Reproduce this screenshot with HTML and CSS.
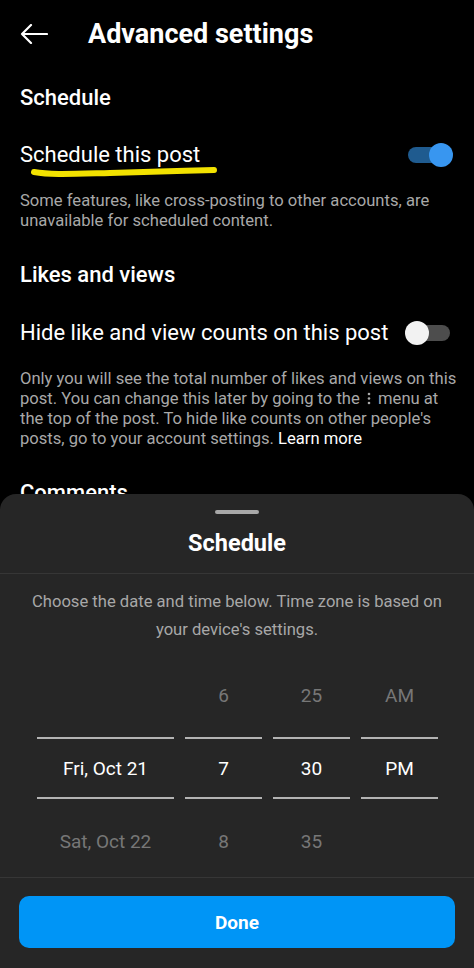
FILE: index.html
```html
<!DOCTYPE html>
<html>
<head>
    <title>Advanced settings</title>
    <link rel="stylesheet" href="styles.css">
</head>
<body>
  <div class="screen">

    <div class="topbar">
      <svg class="back" width="28" height="20" viewBox="0 0 28 20">
        <path d="M27 10H2M11 1L2 10l9 9" fill="none" stroke="#fff" stroke-width="2.2" stroke-linecap="round" stroke-linejoin="round"/>
      </svg>
      <h1>Advanced settings</h1>
    </div>

    <div class="section">
      <h2>Schedule</h2>
      <div class="row">
        <span class="label marked">Schedule this post
          <svg class="scribble" width="190" height="16" viewBox="0 0 190 16">
            <path d="M4 9C20 12 40 11 80 10S150 8 184 7" fill="none" stroke="#f2e200" stroke-width="6" stroke-linecap="round"/>
          </svg>
        </span>
        <span class="toggle on"><span class="knob"></span></span>
      </div>
      <p class="note">Some features, like cross-posting to other accounts, are unavailable for scheduled content.</p>
    </div>

    <div class="section">
      <h2>Likes and views</h2>
      <div class="row">
        <span class="label">Hide like and view counts on this post</span>
        <span class="toggle off"><span class="knob"></span></span>
      </div>
      <p class="note wide">Only you will see the total number of likes and views on this post. You can change this later by going to the <svg class="dots" width="4" height="13" viewBox="0 0 4 13"><circle cx="2" cy="2" r="1.3" fill="#a8a8a8"/><circle cx="2" cy="6.5" r="1.3" fill="#a8a8a8"/><circle cx="2" cy="11" r="1.3" fill="#a8a8a8"/></svg> menu at the top of the post. To hide like counts on other people's posts, go to your account settings. <span class="link">Learn more</span></p>
    </div>

    <div class="section">
      <h2>Comments</h2>
    </div>

    <div class="sheet">
      <div class="handle"></div>
      <h3>Schedule</h3>
      <p class="sheet-note">Choose the date and time below. Time zone is based on your device's settings.</p>

      <div class="picker">
        <div class="col date">
          <div class="cell"></div>
          <div class="cell current">Fri, Oct 21</div>
          <div class="cell next">Sat, Oct 22</div>
        </div>
        <div class="col">
          <div class="cell">6</div>
          <div class="cell current">7</div>
          <div class="cell next">8</div>
        </div>
        <div class="col">
          <div class="cell">25</div>
          <div class="cell current">30</div>
          <div class="cell next">35</div>
        </div>
        <div class="col">
          <div class="cell">AM</div>
          <div class="cell current">PM</div>
          <div class="cell next"></div>
        </div>
      </div>

      <div class="footer">
        <button class="done">Done</button>
      </div>
    </div>

  </div>
</body>
</html>
```

FILE: styles.css
```css
body {
  margin: 0;
  background: #000;
  color: #fff;
  font-family: Roboto, 'Noto Sans', sans-serif;
}

.screen {
  position: relative;
  width: 474px;
  height: 968px;
  overflow: hidden;
  background: #000;
}

.topbar {
  display: flex;
  align-items: center;
  height: 68px;
  padding-left: 20px;
}
.back {
  margin-right: 40px;
}
h1 {
  margin: 0;
  font-size: 27px;
  font-weight: 700;
}

.section {
  padding: 0 20px;
}
h2 {
  margin: 18px 0 0;
  font-size: 22px;
  font-weight: 500;
  line-height: 24px;
}

.row {
  display: flex;
  align-items: center;
  justify-content: space-between;
  height: 40px;
  margin-top: 25px;
}
.label {
  font-size: 22px;
  line-height: 24px;
}
.marked {
  position: relative;
}
.scribble {
  position: absolute;
  left: 10px;
  top: 20px;
}

.toggle {
  position: relative;
  width: 44px;
  height: 16px;
  border-radius: 8px;
  margin-right: 2px;
}
.toggle .knob {
  position: absolute;
  top: -4px;
  width: 24px;
  height: 24px;
  border-radius: 50%;
}
.toggle.on {
  background: #1f5b8f;
}
.toggle.on .knob {
  right: -1px;
  background: #3896f0;
}
.toggle.off {
  background: #4d4d4d;
  margin-right: 4px;
}
.toggle.off .knob {
  left: -1px;
  background: #f2f2f2;
}

.note {
  margin: 16px 0 0;
  font-size: 16.6px;
  line-height: 20px;
  color: #a8a8a8;
}
.note.wide {
  margin-right: -8px;
}
.note .dots {
  margin: 0 3px;
  vertical-align: -1px;
}
.note .link {
  color: #fff;
}

.section + .section h2 {
  margin-top: 32px;
}
.section + .section .row {
  margin-top: 26px;
}
.section + .section .note {
  margin-top: 16px;
}

.sheet {
  position: absolute;
  left: 0;
  right: 0;
  bottom: 0;
  height: 474px;
  background: #262626;
  border-radius: 16px 16px 0 0;
  display: flex;
  flex-direction: column;
  align-items: center;
}
.handle {
  width: 44px;
  height: 4px;
  border-radius: 2px;
  background: #a8a8a8;
  margin-top: 16px;
}
h3 {
  align-self: stretch;
  margin: 15px 0 0;
  padding-bottom: 16px;
  border-bottom: 1px solid #363636;
  text-align: center;
  font-size: 23.5px;
  font-weight: 700;
  line-height: 28px;
}
.sheet-note {
  margin: 14px 0 0;
  padding: 0 26px;
  text-align: center;
  font-size: 16.6px;
  line-height: 28px;
  color: #a8a8a8;
}

.picker {
  display: grid;
  grid-template-columns: 137px 77px 77px 77px;
  column-gap: 11px;
  margin-top: 15px;
  align-self: stretch;
  justify-content: center;
  padding-left: 1px;
  border-bottom: 1px solid #363636;
}
.cell {
  display: flex;
  align-items: center;
  justify-content: center;
  height: 72px;
  padding-bottom: 6px;
  font-size: 19px;
  color: #777;
}
.cell.current {
  height: 58px;
  padding: 0;
  border-top: 2px solid #b3b3b3;
  border-bottom: 2px solid #b3b3b3;
  color: #fff;
}
.cell.next {
  padding: 6px 0 0;
}

.footer {
  align-self: stretch;
  padding: 18px 19px 0;
}
.done {
  width: 100%;
  height: 52px;
  border: 0;
  border-radius: 10px;
  background: #0095f6;
  color: #fff;
  font-family: Roboto, sans-serif;
  font-size: 19px;
  font-weight: 700;
}
```
